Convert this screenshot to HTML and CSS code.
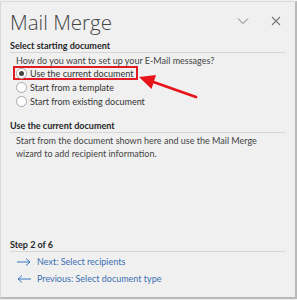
FILE: index.html
```html
<!DOCTYPE html>
<html lang="en">
  <head>
    <meta charset="UTF-8" />
    <title>Mail Merge</title>
    <link rel="stylesheet" href="styles.css">
  </head>
  <body>
    <div class="pane">
      <div class="header">
        <div class="title">Mail Merge</div>
        <div class="tools">
          <svg width="12" height="8" viewBox="0 0 12 8"><path d="M1 1.5 L6 6.5 L11 1.5" fill="none" stroke="#777" stroke-width="1"/></svg>
          <svg width="10" height="10" viewBox="0 0 10 10"><path d="M1 1 L9 9 M9 1 L1 9" fill="none" stroke="#777" stroke-width="1.1"/></svg>
        </div>
      </div>

      <div class="section">
        <div class="heading">Select starting document</div>
        <div class="body">
          <p class="question">How do you want to set up your E-Mail messages?</p>
          <div class="choice marked">
            <span class="radio checked"></span>Use the current document
          </div>
          <div class="choice">
            <span class="radio"></span>Start from a template
          </div>
          <div class="choice">
            <span class="radio"></span>Start from existing document
          </div>
        </div>
      </div>

      <div class="section">
        <div class="heading">Use the current document</div>
        <div class="body tight">
          <p class="info">Start from the document shown here and use the Mail Merge<br>wizard to add recipient information.</p>
        </div>
      </div>

      <div class="spacer"></div>

      <div class="section last">
        <div class="heading">Step 2 of 6</div>
        <div class="body tight">
          <div class="link">
            <svg width="14" height="8" viewBox="0 0 14 8"><path d="M0 4 H13 M9 0.5 L13 4 L9 7.5" fill="none" stroke="#3a78c3" stroke-width="1"/></svg>
            Next: Select recipients
          </div>
          <div class="link">
            <svg width="14" height="8" viewBox="0 0 14 8"><path d="M14 4 H1 M5 0.5 L1 4 L5 7.5" fill="none" stroke="#3a78c3" stroke-width="1"/></svg>
            Previous: Select document type
          </div>
        </div>
      </div>

      <svg class="pointer" width="70" height="35" viewBox="0 0 70 35">
        <path d="M61 28 L17 12.5" stroke="#e8141b" stroke-width="2.8" stroke-linecap="round"/>
        <path d="M4 8 L21 6 L16.5 20 Z" fill="#e8141b"/>
      </svg>
    </div>
  </body>
</html>
```

FILE: styles.css
```css
* {
  padding: 0;
  margin: 0;
  box-sizing: border-box;
}
body {
  background: #f0f0f0;
  font-family: "Lato", "Open Sans", sans-serif;
  font-size: 9px;
  color: #333;
}
.pane {
  position: relative;
  width: 297px;
  height: 298px;
  border-top: 1px solid #dcdcdc;
  border-left: 1px solid #d8d8d8;
  border-right: 2px solid #b9b9b9;
  border-bottom: 2px solid #b9b9b9;
  margin-top: 1px;
  padding: 0 10px 0 9px;
  display: flex;
  flex-direction: column;
}
.header {
  display: flex;
  align-items: center;
  justify-content: space-between;
  height: 38px;
}
.title {
  font-family: "Open Sans", sans-serif;
  font-size: 20.5px;
  font-weight: 300;
  color: #444;
  padding-top: 2px;
}
.tools {
  display: flex;
  align-items: center;
  gap: 22px;
  padding-right: 4px;
}
.heading {
  font-weight: 700;
  color: #262626;
  border-bottom: 1px solid #d6d6d6;
  line-height: 12px;
}
.body {
  padding: 2px 0 0 6px;
}
.body.tight {
  padding-top: 1px;
}
.question {
  line-height: 11px;
  color: #444;
}
.choice {
  display: flex;
  align-items: center;
  height: 14px;
  width: fit-content;
  padding: 0 3px 0 1px;
  margin-left: -3px;
  border: 2px solid transparent;
}
.choice.marked {
  border-color: #e01b22;
}
.radio {
  width: 11px;
  height: 11px;
  border: 1px solid #a8a8a8;
  border-radius: 50%;
  background: #fff;
  margin-right: 3px;
  display: flex;
  align-items: center;
  justify-content: center;
}
.radio.checked::after {
  content: "";
  width: 5px;
  height: 5px;
  border-radius: 50%;
  background: #444;
}
.section + .section {
  margin-top: 12px;
}
.info {
  line-height: 13px;
  color: #444;
}
.spacer {
  flex: 1;
}
.link {
  display: flex;
  align-items: center;
  gap: 6px;
  color: #3b6fb0;
  height: 17px;
  margin-left: 1px;
}
.last {
  margin-bottom: 10px;
}
.pointer {
  position: absolute;
  left: 134px;
  top: 67px;
}
```
